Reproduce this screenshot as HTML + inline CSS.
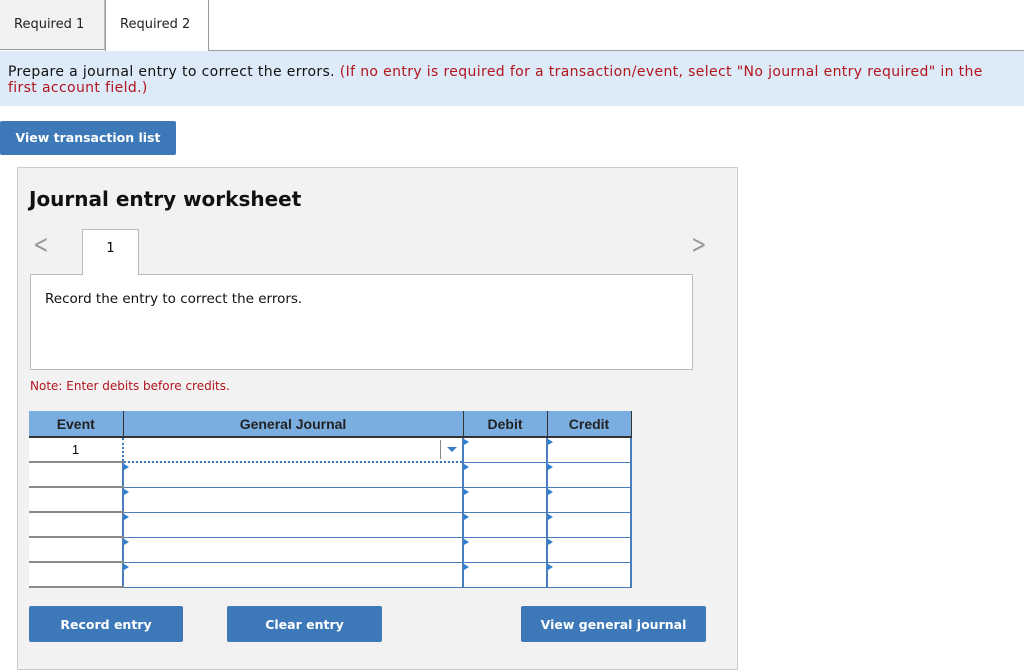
<!DOCTYPE html>
<html><head><meta charset="utf-8"><style>
*{margin:0;padding:0;box-sizing:border-box}
body{width:1024px;height:672px;background:#fff;position:relative;font-family:"DejaVu Sans","Liberation Sans",sans-serif;overflow:hidden}
.a{position:absolute}
.tab1{left:0;top:0;width:105px;height:50px;background:#f2f2f2;border-right:1px solid #bbb;border-bottom:1px solid #999;font-size:13px;line-height:50px;padding-left:14px;color:#222}
.tab2{left:105px;top:0;width:104px;height:51px;background:#fff;border-left:1px solid #999;border-right:1px solid #999;font-size:13px;line-height:50px;padding-left:14px;color:#222}
.line{left:209px;top:50px;width:815px;height:1px;background:#999}
.banner{left:0;top:51px;width:1024px;height:55px;background:#dcebf7;font-size:14px;line-height:16px;padding:13px 10px 0 8px;color:#111;letter-spacing:.36px;white-space:nowrap}
.red{color:#b3141e}
.btn{background:#3d79b9;color:#fff;font-weight:bold;font-size:12.5px;text-align:center;border-radius:2px}
.ws{left:17px;top:167px;width:721px;height:503px;background:#f2f2f2;border:1px solid #ccc}
table{border-collapse:collapse;position:absolute;left:29px;top:411px;font-family:"Liberation Sans",sans-serif}
th{background:#7aaee1;height:26px;font-size:14px;color:#222;border-left:1px solid #333;border-bottom:2px solid #333}
td{height:25px;background:#fff;border-bottom:2px solid #8a8a8a;position:relative}
td.c{border:2px solid #4a7fbf;border-top-width:1px;border-bottom-width:1px}
td.c:after{content:"";position:absolute;left:0;top:1px;border-left:5px solid #2f7fd0;border-top:3px solid transparent;border-bottom:3px solid transparent}
</style></head><body>
<div class="a tab1">Required 1</div>
<div class="a tab2">Required 2</div>
<div class="a line"></div>
<div class="a banner">Prepare a journal entry to correct the errors. <span class="red">(If no entry is required for a transaction/event, select "No journal entry required" in the<br>first account field.)</span></div>
<div class="a btn" style="left:0;top:121px;width:176px;height:34px;line-height:34px">View transaction list</div>
<div class="a ws"></div>
<div class="a" style="left:29px;top:187px;font-size:20px;font-weight:bold;color:#111">Journal entry worksheet</div>
<div class="a" style="left:30px;top:230px;font-size:26px;color:#999;transform:scaleX(.7)">&lt;</div>
<div class="a" style="left:688px;top:230px;font-size:26px;color:#999;transform:scaleX(.7)">&gt;</div>
<div class="a" style="left:30px;top:274px;width:663px;height:96px;background:#fff;border:1px solid #bbb"></div>
<div class="a" style="left:82px;top:229px;width:57px;height:46px;background:#fff;border:1px solid #bbb;border-bottom:none;text-align:center;line-height:38px;font-size:13px">1</div>
<div class="a" style="left:45px;top:291px;font-size:13.5px;color:#111">Record the entry to correct the errors.</div>
<div class="a red" style="left:30px;top:379px;font-size:12px">Note: Enter debits before credits.</div>
<table>
<tr><th style="width:94px;border-left:none">Event</th><th style="width:340px">General Journal</th><th style="width:84px">Debit</th><th style="width:84px;border-right:1px solid #333">Credit</th></tr>
<tr><td style="text-align:center;font-size:13px">1</td><td style="border:2px dotted #3a7cc4;border-right:none"><div style="position:absolute;right:0;top:2px;width:22px;height:19px;border-left:1px solid #888"><div style="position:absolute;left:6px;top:7px;border-top:5px solid #3a7cc4;border-left:5px solid transparent;border-right:5px solid transparent"></div></div></td><td class="c"></td><td class="c"></td></tr>
<tr><td></td><td class="c"></td><td class="c"></td><td class="c"></td></tr>
<tr><td></td><td class="c"></td><td class="c"></td><td class="c"></td></tr>
<tr><td></td><td class="c"></td><td class="c"></td><td class="c"></td></tr>
<tr><td></td><td class="c"></td><td class="c"></td><td class="c"></td></tr>
<tr><td></td><td class="c"></td><td class="c"></td><td class="c"></td></tr>
</table>
<div class="a btn" style="left:29px;top:606px;width:154px;height:36px;line-height:38px">Record entry</div>
<div class="a btn" style="left:227px;top:606px;width:155px;height:36px;line-height:38px">Clear entry</div>
<div class="a btn" style="left:521px;top:606px;width:185px;height:36px;line-height:38px">View general journal</div>
</body></html>
